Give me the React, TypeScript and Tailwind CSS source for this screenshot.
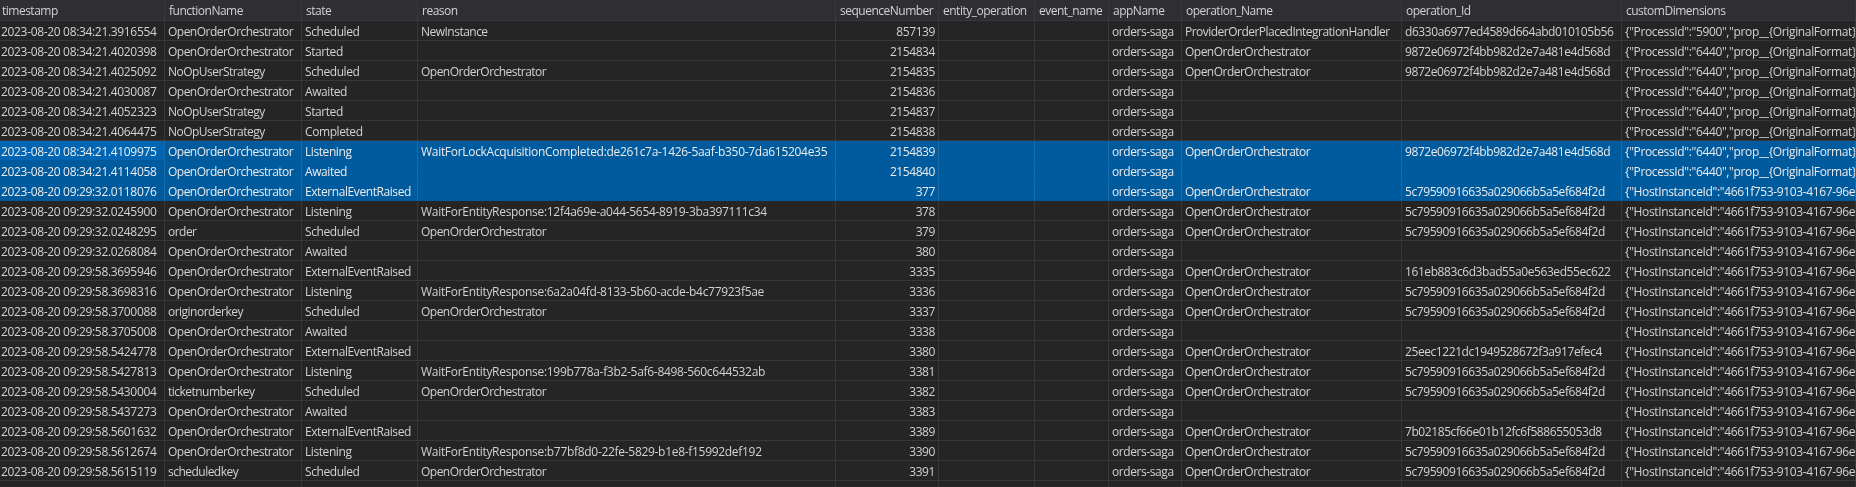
import React from "react";

const cols = [165, 137, 116, 418, 103, 96, 74, 73, 220, 220, 234];
const PF = '{"ProcessId":"6440","prop__{OriginalFormat}":"Function"}';
const HI = '{"HostInstanceId":"4661f753-9103-4167-96e0-7c2a1d5e9f3b"}';
const O = "OpenOrderOrchestrator";
const A = "orders-saga";
const ID1 = "9872e06972f4bb982d2e7a481e4d568d";
const ID2 = "5c79590916635a029066b5a5ef684f2d";
type R = [string, string, string, string, string, string, string, string];
const rows: R[] = [
  ["2023-08-20 08:34:21.3916554", O, "Scheduled", "NewInstance", "857139", "ProviderOrderPlacedIntegrationHandler", "d6330a6977ed4589d664abd010105b56", '{"ProcessId":"5900","prop__{OriginalFormat}":"Function"}'],
  ["2023-08-20 08:34:21.4020398", O, "Started", "", "2154834", O, ID1, PF],
  ["2023-08-20 08:34:21.4025092", "NoOpUserStrategy", "Scheduled", O, "2154835", O, ID1, PF],
  ["2023-08-20 08:34:21.4030087", O, "Awaited", "", "2154836", "", "", PF],
  ["2023-08-20 08:34:21.4052323", "NoOpUserStrategy", "Started", "", "2154837", "", "", PF],
  ["2023-08-20 08:34:21.4064475", "NoOpUserStrategy", "Completed", "", "2154838", "", "", PF],
  ["2023-08-20 08:34:21.4109975", O, "Listening", "WaitForLockAcquisitionCompleted:de261c7a-1426-5aaf-b350-7da615204e35", "2154839", O, ID1, PF],
  ["2023-08-20 08:34:21.4114058", O, "Awaited", "", "2154840", "", "", PF],
  ["2023-08-20 09:29:32.0118076", O, "ExternalEventRaised", "", "377", O, ID2, HI],
  ["2023-08-20 09:29:32.0245900", O, "Listening", "WaitForEntityResponse:12f4a69e-a044-5654-8919-3ba397111c34", "378", O, ID2, HI],
  ["2023-08-20 09:29:32.0248295", "order", "Scheduled", O, "379", O, ID2, HI],
  ["2023-08-20 09:29:32.0268084", O, "Awaited", "", "380", "", "", HI],
  ["2023-08-20 09:29:58.3695946", O, "ExternalEventRaised", "", "3335", O, "161eb883c6d3bad55a0e563ed55ec622", HI],
  ["2023-08-20 09:29:58.3698316", O, "Listening", "WaitForEntityResponse:6a2a04fd-8133-5b60-acde-b4c77923f5ae", "3336", O, ID2, HI],
  ["2023-08-20 09:29:58.3700088", "originorderkey", "Scheduled", O, "3337", O, ID2, HI],
  ["2023-08-20 09:29:58.3705008", O, "Awaited", "", "3338", "", "", HI],
  ["2023-08-20 09:29:58.5424778", O, "ExternalEventRaised", "", "3380", O, "25eec1221dc1949528672f3a917efec4", HI],
  ["2023-08-20 09:29:58.5427813", O, "Listening", "WaitForEntityResponse:199b778a-f3b2-5af6-8498-560c644532ab", "3381", O, ID2, HI],
  ["2023-08-20 09:29:58.5430004", "ticketnumberkey", "Scheduled", O, "3382", O, ID2, HI],
  ["2023-08-20 09:29:58.5437273", O, "Awaited", "", "3383", "", "", HI],
  ["2023-08-20 09:29:58.5601632", O, "ExternalEventRaised", "", "3389", O, "7b02185cf66e01b12fc6f588655053d8", HI],
  ["2023-08-20 09:29:58.5612674", O, "Listening", "WaitForEntityResponse:b77bf8d0-22fe-5829-b1e8-f15992def192", "3390", O, ID2, HI],
  ["2023-08-20 09:29:58.5615119", "scheduledkey", "Scheduled", O, "3391", O, ID2, HI],
];
const headers = ["timestamp", "functionName", "state", "reason", "sequenceNumber", "entity_operation", "event_name", "appName", "operation_Name", "operation_Id", "customDimensions"];

function Cell({ w, children, cls }: { w: number; children?: React.ReactNode; cls?: string }) {
  return (
    <div
      style={{ width: w }}
      className={`shrink-0 h-full overflow-hidden whitespace-nowrap border-r border-[#38383c] leading-[21px] ${cls ?? ""}`}
    >
      {children}
    </div>
  );
}

function trackFor(c: number, v: string) {
  if (c === 0) return "tracking-[-0.33px]";
  if (c === 1 || c === 8) return "tracking-[-0.52px]";
  if (c === 3) return v.startsWith("Wait") ? "tracking-[-0.3px]" : "tracking-[-0.52px]";
  if (c === 10) return "tracking-[-0.36px]";
  return "";
}

function Row({ r, i }: { r: R; i: number }) {
  const sel = i >= 6 && i <= 8;
  const vals = [r[0], r[1], r[2], r[3], r[4], "", "", A, r[5], r[6], r[7]];
  return (
    <div className={`flex h-[20px] shrink-0 box-border border-b ${sel ? "bg-[#005a9e] border-[#005a9e]" : "bg-[#252526] border-[#38383c]"}`}>
      {vals.map((v, c) => {
        const pad = c === 0 ? "pl-[1px]" : c === 4 ? "text-right pr-[3px]" : "pl-[3px]";
        const tone = sel ? `border-r-[#1f6aa5] text-[#ececec] ${c === 0 && i === 6 ? "bg-[#0066b3]" : ""}` : "text-[#d2d2d2]";
        return (
          <Cell key={c} w={cols[c]} cls={`${pad} ${trackFor(c, v)} ${tone}`}>
            {v}
          </Cell>
        );
      })}
    </div>
  );
}

export default function App() {
  return (
    <div className="w-[1856px] h-[487px] overflow-hidden bg-[#252526] flex flex-col font-['Open_Sans','Noto_Sans',sans-serif] text-[12px] tracking-[-0.42px] blur-[0.35px]">
      <div className="flex h-[21px] shrink-0 bg-[#2f2f33] border-b border-[#38383c] text-[#d2d2d2] tracking-[-0.5px]">
        {headers.map((h, c) => (
          <Cell key={h} w={cols[c]} cls={c === 0 ? "pl-[2px]" : "pl-[4px]"}>{h}</Cell>
        ))}
      </div>
      {rows.map((r, i) => (
        <Row key={i} r={r} i={i} />
      ))}
      <div className="flex flex-1">
        {cols.map((w, c) => (
          <Cell key={c} w={w} />
        ))}
      </div>
    </div>
  );
}
